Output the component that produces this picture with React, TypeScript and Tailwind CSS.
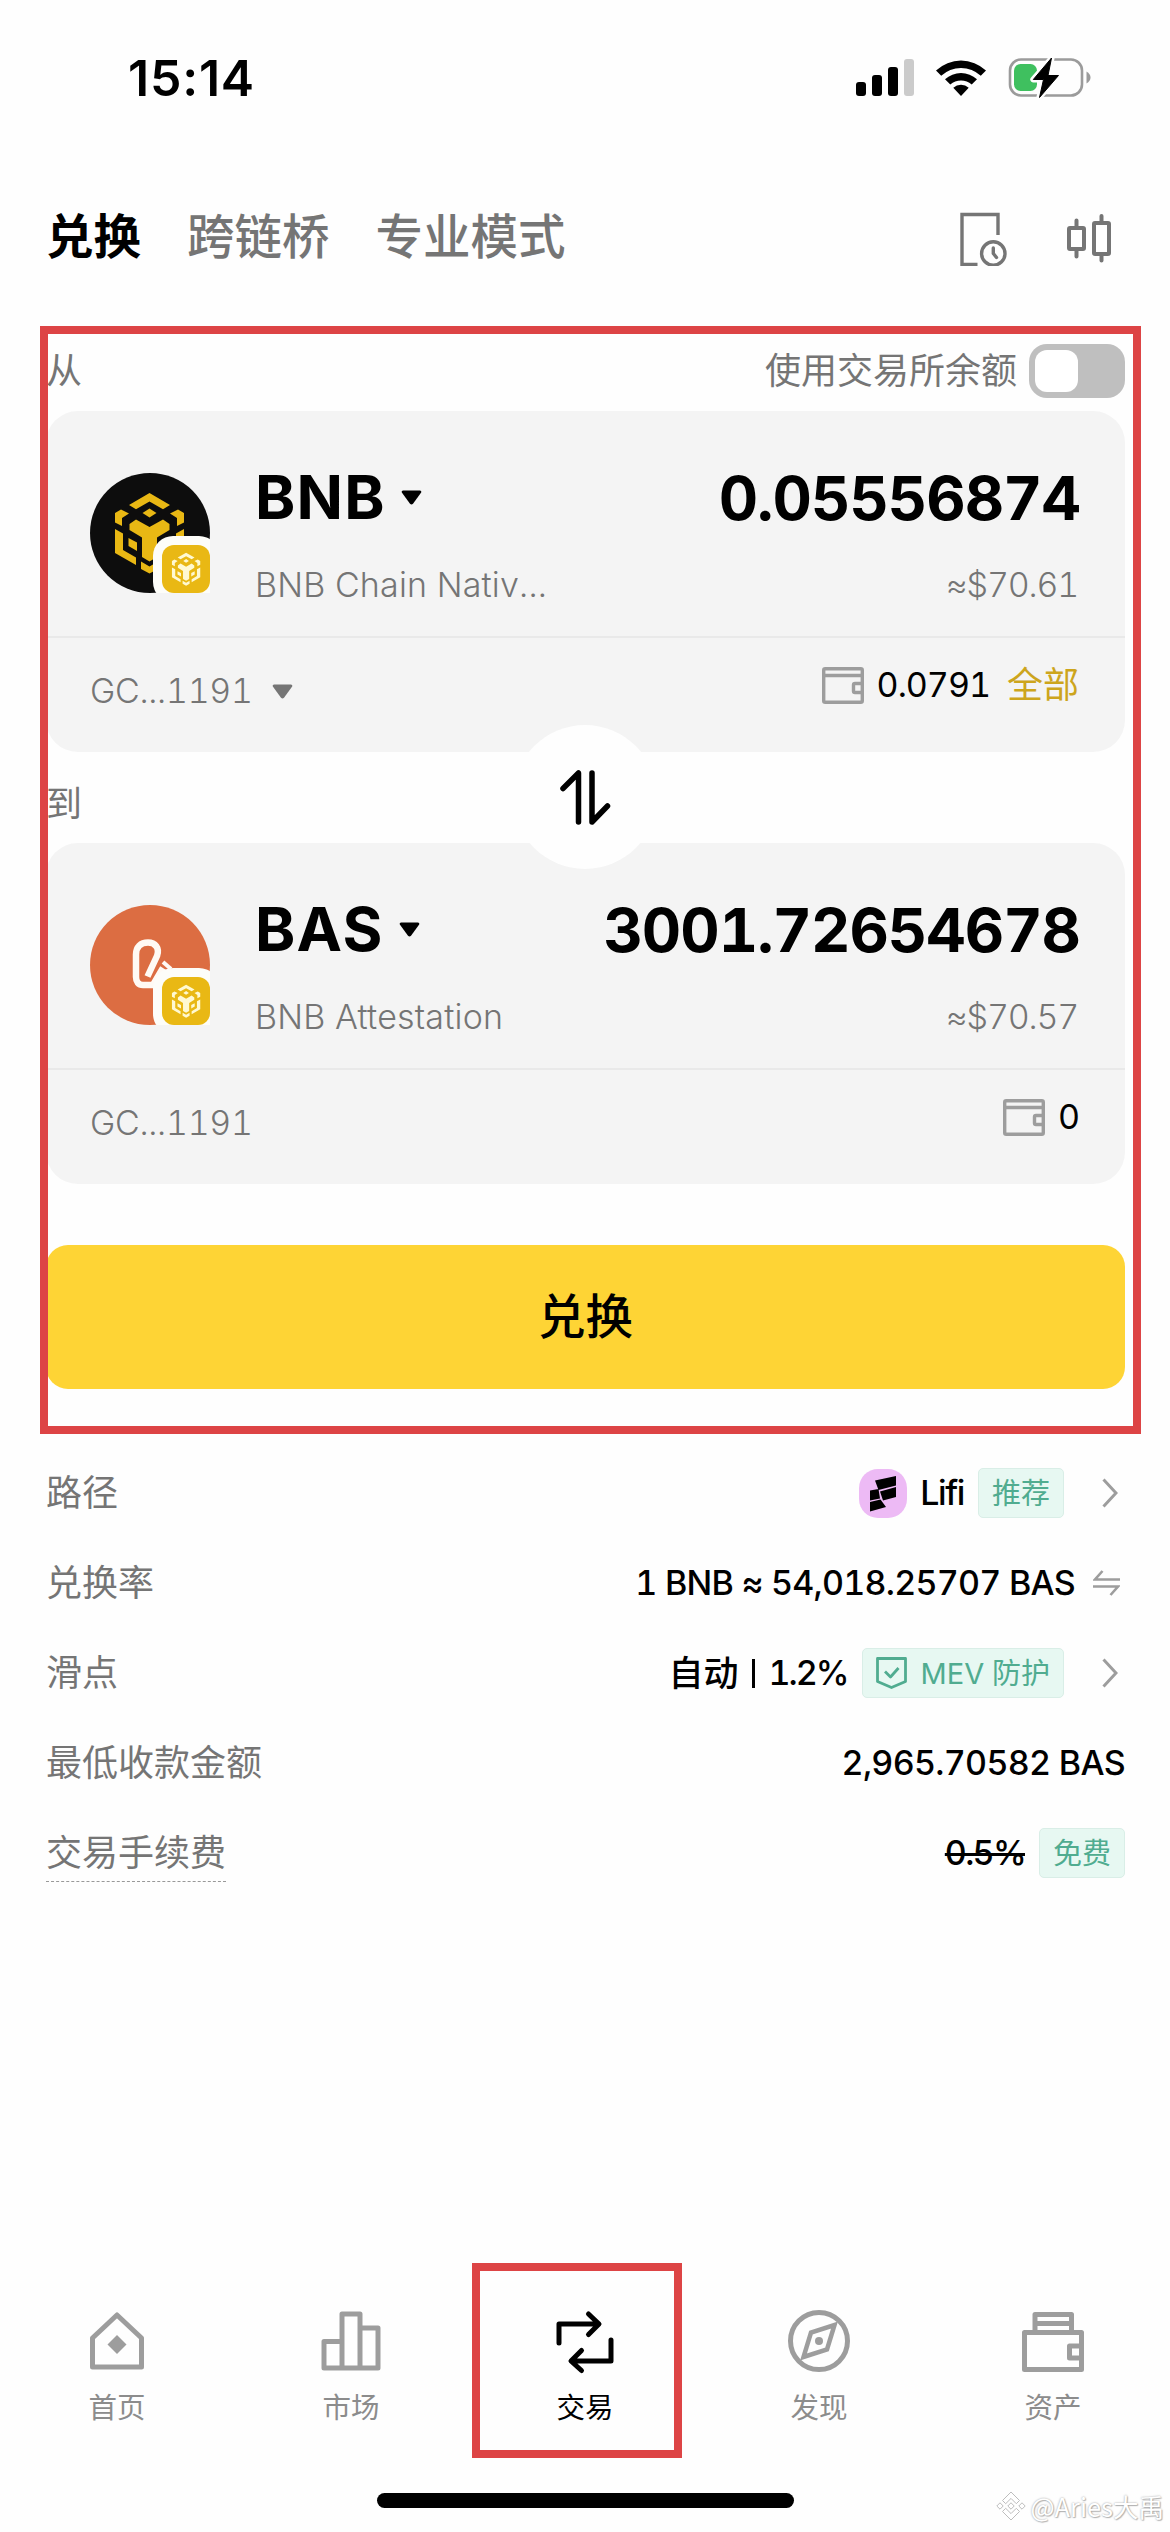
import type { ReactNode } from 'react'
import clsx from 'clsx'

const GREY = '#9d9d9d'

/* ---------- Status bar ---------- */

function StatusBar() {
  return (
    <div className="flex h-[156px] items-center justify-between pl-[128px] pr-[79px]">
      <span className="text-[50px] font-semibold leading-none tracking-[0.8px]">15:14</span>
      <div className="flex items-center">
        <svg className="h-[42px] w-[58px]" viewBox="0 0 58 42">
          <rect x="0" y="25" width="10" height="14" rx="3" />
          <rect x="16" y="18" width="10" height="21" rx="3" />
          <rect x="32" y="10" width="10" height="29" rx="3" />
          <rect x="48" y="2" width="10" height="37" rx="3" fill="#cbcbcb" />
        </svg>
        <svg className="ml-[22px] h-[42px] w-[50px]" viewBox="0 0 50 42">
          <path d="M0 13.5a36.5 36.5 0 0 1 50 0l-5.2 5.3a29 29 0 0 0-39.6 0z" />
          <path d="M9 22.3a23.6 23.6 0 0 1 32 0l-5.3 5.3a16 16 0 0 0-21.4 0z" />
          <path d="M17.3 30.8a11.5 11.5 0 0 1 15.4 0L25 39z" />
        </svg>
        <svg className="ml-[22px] h-[44px] w-[83px]" viewBox="0 0 83 44">
          <rect x="2" y="3.5" width="72" height="36" rx="11" fill="none" stroke="#9b9b9b" strokeWidth="2.6" />
          <path d="M78.500 15.500q4 2.500 4 6t-4 6z" fill="#9b9b9b" />
          <rect x="6" y="8" width="23" height="27" rx="6.500" fill="#3fc05f" />
          <path
            d="M43.500 2.500 25.300 23.500h10.200L31.500 41l19-21.500H40z"
            stroke="#fefefe"
            strokeWidth="6"
            strokeLinejoin="round"
          />
          <path d="M43.500 2 25.300 23.500h10.200L31.500 41.500l19-22H40z" stroke="#000" strokeWidth="1" strokeLinejoin="round" />
        </svg>
      </div>
    </div>
  )
}

/* ---------- Header tabs ---------- */

function Tabs() {
  return (
    <div className="flex h-[162px] items-center justify-between pl-[46px] pr-[59px]">
      <nav className="flex gap-[46px] text-[47.500px] font-medium leading-none text-[#757575]">
        <span className="font-bold text-black">兑换</span>
        <span>跨链桥</span>
        <span>专业模式</span>
      </nav>
      <div className="flex items-center gap-[60px] pt-1">
        <svg className="h-[54px] w-[47px]" viewBox="0 0 47 54" fill="none" stroke="#757575" strokeWidth="3.400">
          <path d="M38 23V2.500H2v50h15.500" />
          <circle cx="33.300" cy="41.500" r="11.700" />
          <path d="M33.300 36v5.500l3.200 4" strokeLinecap="round" />
        </svg>
        <svg className="h-[54px] w-[44px]" viewBox="0 0 44 54" fill="none" stroke="#757575" strokeWidth="4">
          <rect x="2" y="16" width="15" height="21" rx="1" />
          <rect x="27" y="11" width="15" height="31" rx="1" />
          <path d="M9.500 14V8.500M9.500 39v5.500M34.500 9V4M34.500 44v4.500" strokeLinecap="round" />
        </svg>
      </div>
    </div>
  )
}

/* ---------- Logos ---------- */

function ChainGlyph() {
  const side = (
    <>
      <path d="M31 36.500 39 40.500 32 45v8l-7-3.500V40z" />
      <path d="M25 56l8 4.500V77l13 7.500V92L25 80z" />
      <path d="M38.500 65 47 69.500V78l-8.500-5z" />
    </>
  )
  return (
    <g>
      <path d="M59.500 20 80 32l-7 4.200L59.500 28.500 46 36.200 39 32z" />
      <path d="M59.500 35.500 66.500 40l-7 4.500-7-4.500z" />
      {side}
      <g transform="translate(119 0) scale(-1 1)">{side}</g>
      <path d="M39.500 51 46 46.500 59.500 54 73 46.500 79.500 51v6L67 64.500v19.500l-7.500 4.500-7.500-4.500V64.500L39.500 57z" />
      <path d="M51 88.500l8.500 5 8.500-5V96l-8.500 4.500L51 96z" />
    </g>
  )
}

function ChainBadge() {
  return (
    <g>
      <rect x="63" y="63" width="66" height="66" rx="20" fill="#fdfdf9" />
      <rect x="72" y="72" width="48" height="48" rx="12" fill="#e9b814" />
      <g transform="translate(71.700 71.500) scale(.41)" fill="#fff9d2">
        <ChainGlyph />
      </g>
    </g>
  )
}

function BnbLogo() {
  return (
    <svg className="h-[120px] w-[120px]" viewBox="0 0 120 120">
      <circle cx="60" cy="60" r="60" fill="#0d0d0d" />
      <g fill="#e9b814">
        <ChainGlyph />
      </g>
      <ChainBadge />
    </svg>
  )
}

function BasLogo() {
  return (
    <svg className="h-[120px] w-[120px]" viewBox="0 0 120 120">
      <circle cx="60" cy="60" r="60" fill="#dc6d42" />
      <path
        d="M57.500 71.500 67 51c3-8-2-13.500-9-13.500-7.500 0-12 4.500-12 12V72c0 5 2.500 8 7 8h10l10-17"
        fill="none"
        stroke="#fffaf4"
        strokeWidth="6.500"
        strokeLinejoin="round"
      />
      <path d="m73 57 8 7" stroke="#fffaf4" strokeWidth="4" />
      <ChainBadge />
    </svg>
  )
}

/* ---------- Swap cards ---------- */

function Caret({ className }: { className?: string }) {
  return (
    <svg className={clsx('h-[15px] w-[21px]', className)} viewBox="0 0 21 15" fill="currentColor">
      <path d="M2 .5h17q2 .5 1 2.300l-8 11q-1.500 1.400-3 0l-8-11Q0 1 2 .5z" />
    </svg>
  )
}

function WalletIcon() {
  return (
    <svg className="h-[37px] w-[42px]" viewBox="0 0 42 37" fill="none" stroke={GREY} strokeWidth="3.400">
      <rect x="1.700" y="1.700" width="38.600" height="33.600" rx="1.500" />
      <path d="M1.500 8.500h39M40 16.500h-7q-1.500 0-1.500 1.500v6q0 1.500 1.500 1.500h7" />
    </svg>
  )
}

type TokenCardProps = {
  logo: ReactNode
  symbol: string
  name: string
  amount: string
  value: string
  balance: string
  selectable?: boolean
}

function TokenCard({ logo, symbol, name, amount, value, balance, selectable }: TokenCardProps) {
  return (
    <section className="h-[341px] rounded-[32px] bg-[#f4f4f4] text-[34px] leading-none tabular-nums text-[#757575]">
      <div className="flex h-[227px] items-start border-b-2 border-[#e9e9e9] pl-[44px] pr-[47px] pt-[56px]">
        <div className="pt-[6px]">{logo}</div>
        <div className="flex flex-1 flex-col pl-[45px]">
          <div className="flex h-[60px] items-center gap-[15px] text-black">
            <span className="text-[61px] font-bold tracking-[1.200px]">{symbol}</span>
            <Caret />
          </div>
          <span className="mt-[41px] font-[350] tracking-[0.200px]">{name}</span>
        </div>
        <div className="flex flex-col items-end">
          <span className="-mr-[2px] flex h-[60px] items-center pt-[2px] text-[61px] font-bold tracking-[-1px] text-black">
            {amount}
          </span>
          <span className="mt-[41px] font-[350] tracking-[-1.200px]">{value}</span>
        </div>
      </div>
      <div className="flex justify-between pl-[44px] pr-[46px]">
        <div className="flex h-[106px] items-center gap-[19px]">
          <span className="font-[350] tracking-[-0.300px]">GC...1191</span>
          {selectable && <Caret />}
        </div>
        <div className="flex h-[94px] items-center">
          <WalletIcon />
          <span className="ml-[13px] tracking-[-1px] text-black">{balance}</span>
          {selectable && <span className="ml-[17px] text-[36px] text-[#cda51c]">全部</span>}
        </div>
      </div>
    </section>
  )
}

function SwapButton() {
  return (
    <div className="absolute -top-[27px] left-[467px] z-10 flex h-[144px] w-[144px] items-center justify-center rounded-full bg-[#fefefe]">
      <svg
        className="h-[56px] w-[52px]"
        viewBox="0 0 52 56"
        fill="none"
        stroke="#000"
        strokeWidth="5.500"
        strokeLinecap="round"
        strokeLinejoin="round"
      >
        <path d="M4 19.500 19.500 4v49" />
        <path d="M33 4v49l15.500-16" />
      </svg>
    </div>
  )
}

/* ---------- Quote details ---------- */

function Badge({ children }: { children: ReactNode }) {
  return (
    <span className="flex h-[50px] items-center rounded-[5px] border border-[#d9eee7] bg-[#e7f8f2] px-[13px] text-[29px] font-normal text-[#50ac90]">
      {children}
    </span>
  )
}

function Chevron() {
  return (
    <svg className="mx-[7px] ml-[38px] h-[30px] w-[16px]" viewBox="0 0 16 30" fill="none" stroke={GREY} strokeWidth="3">
      <path d="M1.500 1.500 14 15 1.500 28.500" />
    </svg>
  )
}

function DetailRow({ label, dashed, children }: { label: string; dashed?: boolean; children: ReactNode }) {
  return (
    <div className="flex h-[90px] items-center justify-between leading-none">
      <span
        className={clsx(
          'relative text-[36px] text-[#757575]',
          dashed && 'after:absolute after:inset-x-0 after:-bottom-[11px] after:border-b after:border-dashed after:border-[#999999]',
        )}
      >
        {label}
      </span>
      <div className="flex items-center text-[34px] font-medium tabular-nums">{children}</div>
    </div>
  )
}

function Details() {
  return (
    <div className="mt-[59px]">
      <DetailRow label="路径">
        <svg className="h-[49px] w-[48px]" viewBox="0 0 48 49">
          <rect width="48" height="49" rx="19" fill="#edbaf5" />
          <path d="M16 11.500 37 7v9.500L19.500 21zM11 21.500l8.500-1.500L21 29.500 11 31.500zM21 22.500l16-4.500v10l-13 3.500zM11 33l10.500-2.500L27 38l-16 4.500z" />
        </svg>
        <span className="ml-[13px] tracking-[-1.400px]">Lifi</span>
        <div className="ml-[14px]">
          <Badge>推荐</Badge>
        </div>
        <Chevron />
      </DetailRow>
      <DetailRow label="兑换率">
        <span className="tracking-[-0.750px]">1 BNB ≈ 54,018.25707 BAS</span>
        <svg
          className="ml-[18px] mr-[5px] h-[26px] w-[27px]"
          viewBox="0 0 27 26"
          fill="none"
          stroke={GREY}
          strokeWidth="2.600"
        >
          <path d="M27 9.500H2L9.500 1M0 16.500h25L17.500 25" />
        </svg>
      </DetailRow>
      <DetailRow label="滑点">
        <span className="text-[35px]">自动</span>
        <span className="ml-[13px] mr-[14px] h-[29px] w-[3px] bg-black" />
        <span className="tracking-[-2px]">1.2%</span>
        <div className="ml-[14px]">
          <Badge>
            <svg
              className="mr-[14px] h-[32px] w-[31px]"
              viewBox="0 0 31 32"
              fill="none"
              stroke="#50ac90"
              strokeWidth="2.800"
              strokeLinejoin="round"
            >
              <path d="M1.500 1.500h28v23l-14 6-14-6z" />
              <path d="m9 14.500 5.500 5.500 8-9" />
            </svg>
            <span>MEV 防护</span>
          </Badge>
        </div>
        <Chevron />
      </DetailRow>
      <DetailRow label="最低收款金额">
        <span className="tracking-[-0.700px]">2,965.70582 BAS</span>
      </DetailRow>
      <DetailRow label="交易手续费" dashed>
        <span className="tracking-[-1.700px] line-through decoration-[3px]">0.5%</span>
        <div className="ml-[14px]">
          <Badge>免费</Badge>
        </div>
      </DetailRow>
    </div>
  )
}

/* ---------- Bottom navigation ---------- */

const navItems = [
  {
    label: '首页',
    icon: (
      <>
        <path d="M31 5 55.500 28v29H6.500V28z" />
        <path d="m31 25 9.500 9.500L31 44l-9.500-9.500z" fill="currentColor" stroke="none" />
      </>
    ),
  },
  {
    label: '市场',
    icon: <path d="M22 58V4h18v54M22 31.500H4V58h54V18H40" />,
  },
  {
    label: '交易',
    active: true,
    icon: <path d="M5 33V14h38M34.500 4l10.500 10-10.500 10.500M57 30v21H19M27.500 40.500 17 51l10.500 9.500" strokeLinecap="round" />,
  },
  {
    label: '发现',
    icon: (
      <>
        <circle cx="31" cy="31" r="28.500" />
        <path d="M46.500 15 39 39.500 15.500 47 23 22.500z" strokeWidth="4.500" strokeLinejoin="miter" />
        <circle cx="31" cy="31" r="4" fill="currentColor" stroke="none" />
      </>
    ),
  },
  {
    label: '资产',
    icon: (
      <path d="M2.500 22.500h57v37h-57zM13 22V4.500h36.500V22M13 13.500h36M59 36H47.500v12H59" />
    ),
  },
]

function BottomNav() {
  return (
    <footer className="mt-auto">
      <nav className="flex">
        {navItems.map(({ label, icon, active }) => (
          <div
            key={label}
            className={clsx('flex flex-1 flex-col items-center', active ? 'text-black' : 'text-[#9d9d9d]')}
          >
            <svg
              className="h-[62px] w-[62px] overflow-visible"
              viewBox="0 0 62 62"
              fill="none"
              stroke="currentColor"
              strokeWidth="5"
              strokeLinejoin="round"
            >
              {icon}
            </svg>
            <span className={clsx('mt-[22px] text-[28.500px] leading-none', !active && 'text-[#8c8c8c]')}>{label}</span>
          </div>
        ))}
      </nav>
      <div className="mx-auto mb-[24px] mt-[71px] h-[15px] w-[417px] rounded-full bg-black" />
    </footer>
  )
}

function Watermark() {
  return (
    <div className="absolute bottom-[11px] right-[6px] flex items-center gap-[4px] font-['Noto_Sans_CJK_SC',sans-serif] text-[25.500px] leading-none text-white [text-shadow:0_0_2px_#999,1px_1px_1px_#bbb]">
      <svg className="h-[30px] w-[30px]" viewBox="0 0 30 30" fill="#fff" stroke="#bdbdbd" strokeWidth="1">
        <path d="m15 1 8.500 8.500-3.200 3.200L15 7.400l-5.300 5.300-3.200-3.200z" />
        <path d="m15 29 8.500-8.500-3.200-3.200-5.300 5.300-5.300-5.300-3.200 3.200z" />
        <path d="m15 11.800 3.200 3.200-3.200 3.200-3.200-3.200zM4 11.800 7.200 15 4 18.200.8 15zM26 11.800l3.200 3.200-3.200 3.200-3.200-3.200z" />
      </svg>
      @Aries大禹
    </div>
  )
}

export default function App() {
  return (
    <div
      lang="zh-CN"
      className="relative flex h-[2532px] w-[1170px] flex-col overflow-hidden bg-[#fefefe] font-[Inter,'Noto_Sans_CJK_SC',sans-serif] text-black"
    >
      <StatusBar />
      <Tabs />

      <main className="pl-[46px] pr-[45px] pt-[13px]">
        <div className="flex h-[80px] items-center justify-between text-[36px] leading-none text-[#757575]">
          <span>从</span>
          <div className="flex items-center gap-[12px]">
            <span>使用交易所余额</span>
            <div className="flex h-[54px] w-[96px] items-center rounded-[18px] bg-[#bfbfbf] px-[6px]">
              <div className="h-[42px] w-[43px] rounded-[12px] bg-white" />
            </div>
          </div>
        </div>

        <TokenCard
          logo={<BnbLogo />}
          symbol="BNB"
          name="BNB Chain Nativ..."
          amount="0.05556874"
          value="≈$70.61"
          balance="0.0791"
          selectable
        />
        <div className="relative flex h-[91px] items-center pt-[12px] text-[36px] leading-none text-[#757575]">
          到
          <SwapButton />
        </div>
        <TokenCard
          logo={<BasLogo />}
          symbol="BAS"
          name="BNB Attestation"
          amount="3001.72654678"
          value="≈$70.57"
          balance="0"
        />

        <button className="mt-[61px] h-[144px] w-full rounded-[22px] bg-[#fed435] text-[47.500px] font-medium leading-none">
          兑换
        </button>

        <Details />
      </main>

      <BottomNav />

      {/* Highlight frames */}
      <div className="absolute left-[40px] top-[326px] z-20 h-[1108px] w-[1101px] border-8 border-[#dd4445]" />
      <div className="absolute left-[472px] top-[2263px] z-20 h-[195px] w-[210px] border-8 border-[#dd4445]" />
      <Watermark />
    </div>
  )
}
